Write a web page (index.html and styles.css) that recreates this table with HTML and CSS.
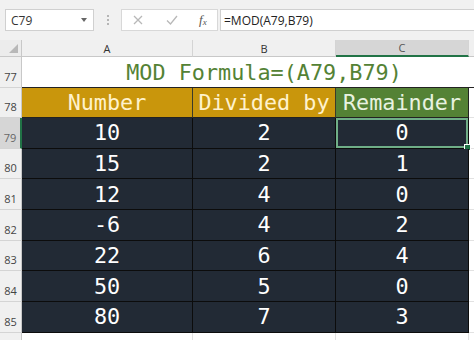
FILE: index.html
```html
<!DOCTYPE html>
<html>
<head>
<meta charset="utf-8">
<link rel="stylesheet" href="styles.css">
</head>
<body>
<div class="toolbar">
  <div class="namebox"><span>C79</span><span class="caret"></span></div>
  <div class="dots"><i></i><i></i><i></i></div>
  <div class="fxbox">
    <svg class="ico" width="14" height="14" viewBox="0 0 14 14"><path d="M3 3 L11 11 M11 3 L3 11" stroke="#b8b8b8" stroke-width="1.3" fill="none"/></svg>
    <svg class="ico" width="14" height="14" viewBox="0 0 14 14"><path d="M2 7.5 L5.5 11 L12 3" stroke="#b8b8b8" stroke-width="1.3" fill="none"/></svg>
    <span class="fx">f<sub>x</sub></span>
  </div>
  <div class="formula">=MOD(A79,B79)</div>
</div>
<div class="sheet">
  <div class="corner"><span class="tri"></span></div>
  <div class="colh">A</div>
  <div class="colh">B</div>
  <div class="colh sel">C</div>
  <div class="colh end"></div>

  <div class="rowh">77</div>
  <div class="title">MOD Formula=(A79,B79)</div>

  <div class="rowh">78</div>
  <div class="hd gold">Number</div>
  <div class="hd gold">Divided by</div>
  <div class="hd green">Remainder</div>
  <div class="blank"></div>

  <div class="rowh selr">79</div>
  <div class="cell">10</div><div class="cell">2</div><div class="cell active">0</div><div class="blank"></div>
  <div class="rowh">80</div>
  <div class="cell">15</div><div class="cell">2</div><div class="cell">1</div><div class="blank"></div>
  <div class="rowh">81</div>
  <div class="cell">12</div><div class="cell">4</div><div class="cell">0</div><div class="blank"></div>
  <div class="rowh">82</div>
  <div class="cell">-6</div><div class="cell">4</div><div class="cell">2</div><div class="blank"></div>
  <div class="rowh">83</div>
  <div class="cell">22</div><div class="cell">6</div><div class="cell">4</div><div class="blank"></div>
  <div class="rowh">84</div>
  <div class="cell">50</div><div class="cell">5</div><div class="cell">0</div><div class="blank"></div>
  <div class="rowh">85</div>
  <div class="cell">80</div><div class="cell">7</div><div class="cell">3</div><div class="blank"></div>

  <div class="rowh"></div>
  <div class="empty"></div><div class="empty"></div><div class="empty"></div><div class="blank"></div>
</div>
</body>
</html>
```
FILE: styles.css
```css
* { box-sizing: border-box; }
html, body { margin: 0; padding: 0; background: #ffffff; overflow: hidden; }
body { width: 474px; height: 340px; font-family: "Open Sans", "Liberation Sans", sans-serif; }

.toolbar {
  height: 40px;
  background: #f1f1f1;
  display: flex;
  align-items: flex-start;
  padding-top: 9px;
  padding-left: 5px;
}
.namebox {
  width: 89px; height: 22px;
  background: #fff;
  border: 1px solid #d0d0d0;
  display: flex; align-items: center; justify-content: space-between;
  padding: 0 6px 0 5px;
  font-size: 12px; color: #333;
}
.caret {
  width: 0; height: 0;
  border-left: 3.5px solid transparent;
  border-right: 3.5px solid transparent;
  border-top: 4px solid #666;
}
.dots {
  width: 27px; height: 22px;
  display: flex; flex-direction: column; align-items: center; justify-content: center; gap: 2px;
}
.dots i { display: block; width: 2px; height: 2px; background: #b5b5b5; }
.fxbox {
  width: 97px; height: 22px;
  background: #fff;
  border: 1px solid #d8d8d8;
  display: flex; align-items: center;
  padding-left: 9px;
  gap: 20px;
}
.fx { font-family: "Liberation Serif", serif; font-style: italic; font-size: 13px; color: #555; }
.fx sub { font-size: 9px; vertical-align: baseline; position: relative; top: 1px; }
.formula {
  flex: 1; height: 22px; margin-left: 2px;
  background: #fff;
  border: 1px solid #d0d0d0; border-right: none;
  font-size: 12px; color: #222;
  display: flex; align-items: center; padding-left: 3px;
}

.sheet {
  display: grid;
  grid-template-columns: 22px 171px 143px 133px 5px;
  grid-template-rows: 17px 31px 30px repeat(7, 30.7px) 10px;
}
.corner {
  background: #ececec;
  border-right: 1px solid #c8c8c8;
  border-bottom: 1px solid #c8c8c8;
  position: relative;
}
.tri {
  position: absolute; right: 3px; bottom: 3px;
  width: 0; height: 0;
  border-left: 9px solid transparent;
  border-bottom: 9px solid #b8b8b8;
}
.colh {
  background: #f0f0f0;
  border-right: 1px solid #d4d4d4;
  border-bottom: 1px solid #c8c8c8;
  font-size: 11px; color: #333;
  display: flex; align-items: center; justify-content: center;
}
.colh.sel { background: #d6d6d6; border-bottom: 2px solid #217346; color: #555; }
.colh.end { border-right: none; }
.rowh {
  background: #f0f0f0;
  border-right: 1px solid #c8c8c8;
  border-bottom: 1px solid #d4d4d4;
  font-size: 11px; color: #444;
  display: flex; align-items: flex-end; justify-content: center;
  padding-bottom: 3px;
}
.rowh.selr { background: #d6d6d6; border-right: 2px solid #217346; color: #666; }
.title {
  grid-column: 2 / 6;
  background: #fff;
  border-bottom: 1px solid #222;
  font-family: "DejaVu Sans Mono", "Liberation Mono", monospace;
  font-size: 21.8px; color: #548235;
  display: flex; align-items: center; justify-content: center;
  padding-left: 32px;
}
.hd {
  font-family: "DejaVu Sans Mono", "Liberation Mono", monospace;
  font-size: 21.8px;
  display: flex; align-items: center; justify-content: center;
  border-right: 1px solid #3a3a2a;
  border-bottom: 1px solid #222;
}
.gold { background: #c9960c; color: #fff2cc; }
.green { background: #548235; color: #e8f2e0; border-right: 1px solid #222; }
.cell {
  background: #222a35;
  color: #ffffff;
  font-family: "DejaVu Sans Mono", "Liberation Mono", monospace;
  font-size: 21.8px;
  display: flex; align-items: center; justify-content: center;
  border-right: 1px solid #0c0c0c;
  border-bottom: 1px solid #0c0c0c;
  position: relative;
}
.cell.active { box-shadow: inset 0 0 0 2px #6fae87; }
.cell.active::after {
  content: ""; position: absolute; right: -3px; bottom: -3px;
  width: 5px; height: 5px; background: #217346; border: 1px solid #fff;
}
.blank { background: #fff; border-bottom: 1px solid #e2e2e2; }
.empty { background: #fff; border-right: 1px solid #e2e2e2; }
```
